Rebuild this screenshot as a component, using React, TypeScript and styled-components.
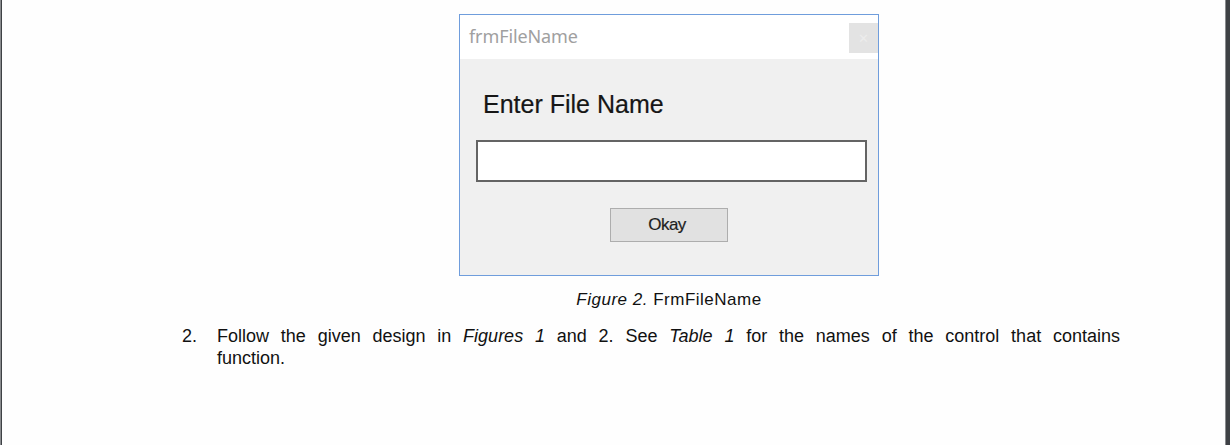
import React from 'react'
import styled, { createGlobalStyle } from 'styled-components'

const GlobalStyle = createGlobalStyle`
  html, body {
    margin: 0;
    padding: 0;
    background: #ffffff;
  }
`

const Pagina = styled.div`
  display: flex;
  width: 1230px;
  height: 445px;
  overflow: hidden;
  background: #fefefe;
`

const Moldura = styled.div<{ $largura: number }>`
  width: ${({ $largura }) => $largura}px;
  flex-shrink: 0;
  background: #3e4145;
  box-shadow: inset 1px 0 0 #8a8c8f;
`

const Documento = styled.div`
  flex: 1;
  display: flex;
  flex-direction: column;
  padding-top: 14px;
`

const Figura = styled.figure`
  margin: 0 0 0 457px;
  width: 420px;
  display: flex;
  flex-direction: column;
  align-items: center;
`

const Janela = styled.div`
  width: 418px;
  height: 260px;
  border: 1px solid #6f9ddc;
  background: #f0f0f0;
  display: flex;
  flex-direction: column;
`

const BarraTitulo = styled.div`
  height: 44px;
  background: #ffffff;
  display: flex;
  align-items: flex-start;
  justify-content: space-between;
  padding-left: 9px;
`

const TituloJanela = styled.span`
  font-family: 'Noto Sans', 'Open Sans', sans-serif;
  font-size: 18px;
  color: #a0a0a0;
  line-height: 42px;
  letter-spacing: -0.1px;
`

const BotaoFechar = styled.div`
  margin-top: 8px;
  width: 29px;
  height: 30px;
  background: #e3e3e3;
  color: #ececec;
  font-family: 'Liberation Sans', Arial, sans-serif;
  font-size: 13px;
  display: flex;
  align-items: center;
  justify-content: center;
`

const CorpoJanela = styled.div`
  flex: 1;
  display: flex;
  flex-direction: column;
  padding: 33px 11px 0 16px;
`

const Rotulo = styled.div`
  font-family: 'Liberation Sans', Arial, sans-serif;
  font-size: 25px;
  line-height: 25px;
  color: #161616;
  padding-left: 7px;
  -webkit-text-stroke: 0.2px #161616;
`

const CaixaTexto = styled.div`
  margin-top: 23px;
  width: 387px;
  height: 38px;
  border: 2px solid #646464;
  background: #ffffff;
`

const LinhaBotao = styled.div`
  display: flex;
  justify-content: center;
  margin-top: 26px;
  padding-right: 5px;
`

const Botao = styled.div`
  box-sizing: border-box;
  width: 118px;
  height: 34px;
  border: 1px solid #adadad;
  background: #e1e1e1;
  font-family: 'Liberation Sans', Arial, sans-serif;
  font-size: 17px;
  letter-spacing: -0.6px;
  color: #1e1e1e;
  -webkit-text-stroke: 0.2px #1e1e1e;
  display: flex;
  align-items: center;
  justify-content: center;
  padding-right: 4px;
`

const Legenda = styled.figcaption`
  margin-top: 15px;
  font-family: 'Liberation Sans', Arial, sans-serif;
  font-size: 17px;
  line-height: 18px;
  color: #111111;
  letter-spacing: 0.5px;
`

const Italico = styled.em`
  font-style: italic;
`

const ItemLista = styled.div`
  display: flex;
  margin: 16px 0 0 180px;
  font-family: 'Liberation Sans', Arial, sans-serif;
  font-size: 18px;
  line-height: 22px;
  color: #111111;
`

const Numero = styled.span`
  width: 35px;
  flex-shrink: 0;
`

const TextoItem = styled.div`
  width: 903px;
`

const LinhaJustificada = styled.div`
  text-align: justify;
  text-align-last: justify;
`

export default function App() {
  return (
    <>
      <GlobalStyle />
      <Pagina>
        <Moldura $largura={2} />
        <Documento>
          <Figura>
            <Janela>
              <BarraTitulo>
                <TituloJanela>frmFileName</TituloJanela>
                <BotaoFechar>✕</BotaoFechar>
              </BarraTitulo>
              <CorpoJanela>
                <Rotulo>Enter File Name</Rotulo>
                <CaixaTexto />
                <LinhaBotao>
                  <Botao>Okay</Botao>
                </LinhaBotao>
              </CorpoJanela>
            </Janela>
            <Legenda>
              <Italico>Figure 2.</Italico> FrmFileName
            </Legenda>
          </Figura>
          <ItemLista>
            <Numero>2.</Numero>
            <TextoItem>
              <LinhaJustificada>
                Follow the given design in <Italico>Figures 1</Italico> and 2. See{' '}
                <Italico>Table 1</Italico> for the names of the control that contains
              </LinhaJustificada>
              <div>function.</div>
            </TextoItem>
          </ItemLista>
        </Documento>
        <Moldura $largura={5} />
      </Pagina>
    </>
  )
}
